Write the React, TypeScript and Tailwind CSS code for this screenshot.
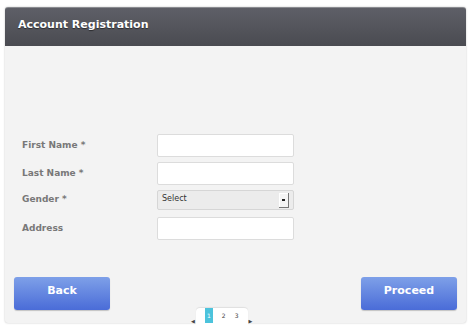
const font = { fontFamily: '"DejaVu Sans", Verdana, sans-serif' };

const fields = [
  { label: "First Name *", kind: "text" },
  { label: "Last Name *", kind: "text" },
  { label: "Gender *", kind: "select" },
  { label: "Address", kind: "text" },
];

function SelectBox() {
  return (
    <div className="flex h-[20px] w-[137px] items-start justify-between rounded-[2px] border border-[#d6d6d6] bg-[#ececec] pl-[4px] pr-[4px] pt-[2px]">
      <span className="text-[8px] leading-[11px] text-[#333]">Select</span>
      <span className="flex h-[15px] w-[10px] items-center justify-center border-b border-r border-[#777] bg-[#f4f4f4] shadow-[inset_1px_1px_0_#fff]">
        <span className="block h-[2px] w-[3px] bg-[#222]" />
      </span>
    </div>
  );
}

export default function App() {
  return (
    <div className="h-[332px] w-[474px] bg-white pl-[5px] pt-[7px]" style={font}>
      <div className="relative flex h-[316px] w-[461px] flex-col rounded-[3px] bg-[#f3f3f3] shadow-[0_0_2px_rgba(0,0,0,0.25)]">
        {/* Header */}
        <div className="flex h-[39px] items-start rounded-t-[3px] border-t border-[#8a8b90] bg-[linear-gradient(to_bottom,#5e5f67,#4a4b51)] pl-[13px] pt-[10px]">
          <span className="text-[11px] font-bold leading-[14px] text-white [text-shadow:0_1px_1px_rgba(0,0,0,0.5)]">
            Account Registration
          </span>
        </div>

        {/* Form */}
        <div className="mt-[88px] flex flex-col gap-[5px] pl-[17px]">
          {fields.map((f) => (
            <div key={f.label} className={`flex items-center ${f.label === "Address" ? "mt-[2px]" : ""}`}>
              <span className="w-[135px] text-[9px] font-bold text-[#787878]">{f.label}</span>
              {f.kind === "select" ? (
                <SelectBox />
              ) : (
                <div className="h-[23px] w-[137px] rounded-[2px] border border-[#dcdcdc] bg-white" />
              )}
            </div>
          ))}
        </div>

        {/* Buttons */}
        <div className="mt-auto mb-[13px] flex justify-between px-[9px]">
          <button className="flex h-[33px] w-[96px] justify-center rounded-[3px] bg-[linear-gradient(to_bottom,#7ea0e8,#4a6cd8)] pt-[6px] text-[11px] font-bold text-white shadow-[0_1px_1px_rgba(0,0,0,0.2)]">
            Back
          </button>
          <button className="flex h-[33px] w-[96px] justify-center rounded-[3px] bg-[linear-gradient(to_bottom,#7ea0e8,#4a6cd8)] pt-[6px] text-[11px] font-bold text-white shadow-[0_1px_1px_rgba(0,0,0,0.2)]">
            Proceed
          </button>
        </div>

        {/* Pager tab */}
        <div className="absolute bottom-[-2px] left-[186px] flex items-end">
          <span className="mb-[1px] text-[5px] leading-none text-[#444]">◀</span>
          <div className="ml-[1px] flex h-[17px] items-start gap-[9px] rounded-t-[4px] bg-white pl-[9px] pr-[9px] shadow-[0_-1px_1px_rgba(0,0,0,0.08)]">
            <span className="flex h-[15px] w-[8px] items-center justify-center bg-[#4cc3dc] text-[6px] text-white">1</span>
            <span className="flex h-[15px] items-center text-[6px] text-[#444]">2</span>
            <span className="flex h-[15px] items-center text-[6px] text-[#444]">3</span>
          </div>
          <span className="mb-[1px] ml-[1px] text-[5px] leading-none text-[#444]">▶</span>
        </div>
      </div>
    </div>
  );
}
